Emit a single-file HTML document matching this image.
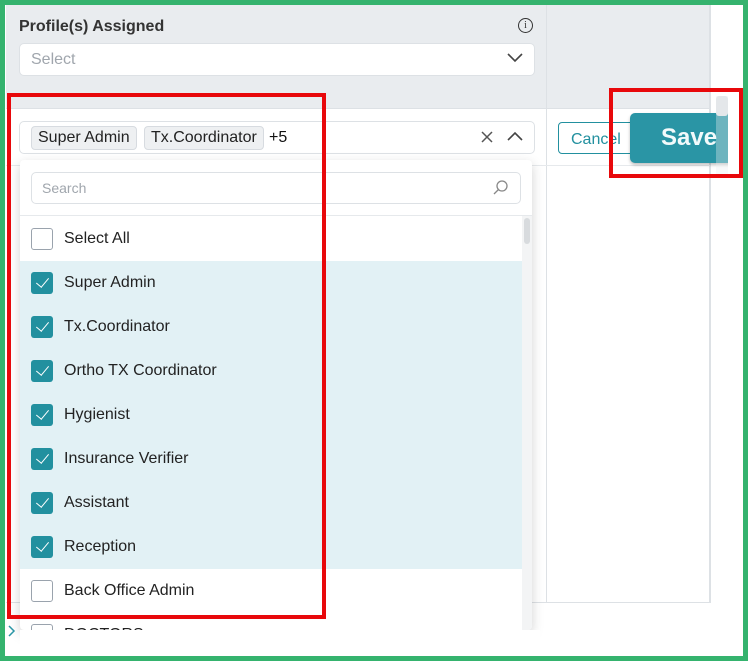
<!DOCTYPE html>
<html><head><style>
*{box-sizing:border-box;margin:0;padding:0}
body{width:748px;height:661px;position:relative;overflow:hidden;background:#fff;font-family:"Liberation Sans",Arial,sans-serif;}
.abs{position:absolute}
.cb{position:absolute;left:31px;width:22px;height:22px;border-radius:3px}
.on{background:#22909f}
.off{border:1.5px solid #9aa3ad;background:#fff}
.lbl{position:absolute;left:64px;font-size:16px;color:#222}
.on::after{content:"";position:absolute;left:8px;top:3px;width:6px;height:11px;border:solid #fff;border-width:0 1.5px 1.5px 0;transform:rotate(40deg)}
</style></head><body>
<!-- gray header -->
<div class="abs" style="left:6px;top:5px;width:704px;height:104px;background:#e9ecef;border-bottom:1px solid #dde1e5"></div>
<div class="abs" style="left:546px;top:5px;width:1px;height:598px;background:#dde1e5"></div>
<div class="abs" style="left:709px;top:5px;width:2px;height:598px;background:#dde1e5"></div>
<div class="abs" style="left:6px;top:602px;width:705px;height:1px;background:#dde1e5"></div>
<div class="abs" style="left:6px;top:165px;width:704px;height:1px;background:#e6e9ec"></div>
<div class="abs" style="left:19px;top:18px;font-size:16px;font-weight:bold;color:#333">Profile(s) Assigned</div>
<div class="abs" style="left:518px;top:18px;width:15px;height:15px;border:1.3px solid #333;border-radius:50%;font-size:10px;text-align:center;line-height:13px;font-family:'Liberation Serif';color:#333">i</div>
<div class="abs" style="left:19px;top:43px;width:516px;height:33px;background:#fff;border:1px solid #dde1e5;border-radius:5px"></div>
<div class="abs" style="left:31px;top:51px;font-size:16px;color:#a0a6ad">Select</div>
<svg class="abs" style="left:506px;top:52px" width="18" height="12"><path d="M2 2l7 7 7-7" stroke="#444" stroke-width="1.6" fill="none"/></svg>
<!-- multi select -->
<div class="abs" style="left:19px;top:121px;width:516px;height:33px;background:#fff;border:1px solid #dde1e5;border-radius:5px"></div>
<div class="abs" style="left:31px;top:126px;height:24px;padding:0 6px;background:#eef0f2;border:1px solid #d7dbe0;border-radius:4px;font-size:16px;line-height:22px;color:#222">Super Admin</div>
<div class="abs" style="left:144px;top:126px;height:24px;padding:0 6px;background:#eef0f2;border:1px solid #d7dbe0;border-radius:4px;font-size:16px;line-height:22px;color:#222">Tx.Coordinator</div>
<div class="abs" style="left:269px;top:129px;font-size:16px;color:#111">+5</div>
<svg class="abs" style="left:480px;top:130px" width="14" height="14"><path d="M2 2l10 10M12 2L2 12" stroke="#555" stroke-width="1.5"/></svg>
<svg class="abs" style="left:506px;top:131px" width="18" height="12"><path d="M2 9l7-7 7 7" stroke="#444" stroke-width="1.6" fill="none"/></svg>
<!-- cancel/save -->
<div class="abs" style="left:558px;top:122px;width:80px;height:32px;border:1px solid #22909f;border-radius:4px;font-size:16px;color:#22909f;padding:8px 0 0 12px;overflow:hidden">Cancel</div>
<div class="abs" style="left:630px;top:113px;width:110px;height:50px;background:#2a95a5;border-radius:5px;font-size:24px;font-weight:bold;color:#f2fafb;padding:11px 0 0 31px;box-shadow:0 2px 3px rgba(0,0,0,.25)">Save</div>
<div class="abs" style="left:728px;top:90px;width:20px;height:90px;background:#fff"></div>
<div class="abs" style="left:716px;top:96px;width:12px;height:80px;background:rgba(236,239,241,.35)"></div>
<div class="abs" style="left:716px;top:96px;width:12px;height:20px;background:#e4e7ea;border-radius:3px"></div>
<!-- dropdown -->
<div class="abs" style="left:20px;top:160px;width:512px;height:470px;background:#fff;border-radius:4px;box-shadow:0 4px 12px rgba(0,0,0,.18);overflow:hidden">
 <div class="abs" style="left:0;top:55px;width:512px;height:1px;background:#e6e9ec"></div>
 <div class="abs" style="left:0;top:101px;width:502px;height:308px;background:#e2f1f5"></div>
 <div class="abs" style="left:502px;top:56px;width:10px;height:414px;background:#f3f4f5"></div>
 <div class="abs" style="left:504px;top:58px;width:6px;height:26px;background:#d8dbde;border-radius:3px"></div>
</div>
<div class="abs" style="left:31px;top:172px;width:490px;height:32px;border:1px solid #dde1e5;border-radius:5px"></div>
<div class="abs" style="left:42px;top:180px;font-size:14px;color:#a0a6ad">Search</div>
<svg class="abs" style="left:492px;top:179px" width="18" height="18"><circle cx="10" cy="7" r="5" stroke="#888" stroke-width="1.3" fill="none"/><path d="M6.5 10.5L2 15" stroke="#888" stroke-width="1.3"/></svg>
<div class="cb off" style="top:228px"></div><div class="lbl" style="top:230px">Select All</div>
<div class="cb on" style="top:272px"></div><div class="lbl" style="top:274px">Super Admin</div>
<div class="cb on" style="top:316px"></div><div class="lbl" style="top:318px">Tx.Coordinator</div>
<div class="cb on" style="top:360px"></div><div class="lbl" style="top:362px">Ortho TX Coordinator</div>
<div class="cb on" style="top:404px"></div><div class="lbl" style="top:406px">Hygienist</div>
<div class="cb on" style="top:448px"></div><div class="lbl" style="top:450px">Insurance Verifier</div>
<div class="cb on" style="top:492px"></div><div class="lbl" style="top:494px">Assistant</div>
<div class="cb on" style="top:536px"></div><div class="lbl" style="top:538px">Reception</div>
<div class="cb off" style="top:580px"></div><div class="lbl" style="top:582px">Back Office Admin</div>
<div class="cb off" style="top:624px"></div><div class="lbl" style="top:626px">DOCTORS</div>
<div class="abs" style="left:20px;top:630px;width:520px;height:25px;background:#fff"></div>
<svg class="abs" style="left:7px;top:624px" width="10" height="14"><path d="M2 2l5 5-5 5" stroke="#2a95a5" stroke-width="1.5" fill="none"/></svg>
<!-- red boxes -->
<div class="abs" style="left:7px;top:93px;width:319px;height:526px;border:4px solid #e8080b"></div>
<div class="abs" style="left:609px;top:88px;width:134px;height:90px;border:4px solid #e8080b"></div>
<div class="abs" style="left:0;top:0;width:748px;height:661px;border:5px solid #35b36e"></div>
</body></html>
